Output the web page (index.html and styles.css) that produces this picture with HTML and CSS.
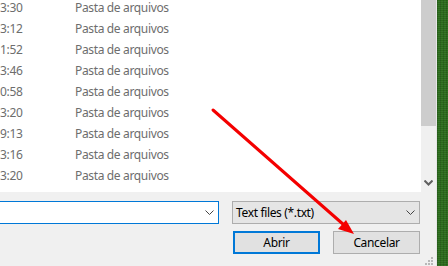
FILE: index.html
```html
<!DOCTYPE html>
<html>
<head>
<meta charset="utf-8">
<link rel="stylesheet" href="styles.css">
</head>
<body>
<div class="screen">
  <div class="dialog">
    <div class="browser">
      <div class="list">
        <div class="rows">
          <div class="row"><span class="time">3:30</span><span class="type">Pasta de arquivos</span></div>
          <div class="row"><span class="time">3:12</span><span class="type">Pasta de arquivos</span></div>
          <div class="row"><span class="time">1:52</span><span class="type">Pasta de arquivos</span></div>
          <div class="row"><span class="time">3:46</span><span class="type">Pasta de arquivos</span></div>
          <div class="row"><span class="time">0:58</span><span class="type">Pasta de arquivos</span></div>
          <div class="row"><span class="time">3:20</span><span class="type">Pasta de arquivos</span></div>
          <div class="row"><span class="time">9:13</span><span class="type">Pasta de arquivos</span></div>
          <div class="row"><span class="time">3:16</span><span class="type">Pasta de arquivos</span></div>
          <div class="row"><span class="time">3:20</span><span class="type">Pasta de arquivos</span></div>
        </div>
      </div>
      <div class="scrollbar">
        <div class="thumb"></div>
        <div class="track">
          <svg class="down" width="9" height="6" viewBox="0 0 9 6"><path d="M0.5 0.5 L4.5 4.5 L8.5 0.5" fill="none" stroke="#606060" stroke-width="2"/></svg>
        </div>
      </div>
    </div>
    <div class="controls">
      <div class="line">
        <div class="filename">
          <svg class="chev" width="9" height="5" viewBox="0 0 9 5"><path d="M0.5 0.5 L4.5 4.5 L8.5 0.5" fill="none" stroke="#444" stroke-width="1"/></svg>
        </div>
        <div class="filter">
          <span>Text files (*.txt)</span>
          <svg class="chev" width="9" height="5" viewBox="0 0 9 5"><path d="M0.5 0.5 L4.5 4.5 L8.5 0.5" fill="none" stroke="#444" stroke-width="1"/></svg>
        </div>
      </div>
      <div class="line buttons">
        <div class="btn primary">Abrir</div>
        <div class="btn">Cancelar</div>
      </div>
    </div>
    <svg class="grip" width="8" height="8" viewBox="0 0 8 8">
      <rect x="6" y="0" width="2" height="2" fill="#b8b8b8"/>
      <rect x="3" y="3" width="2" height="2" fill="#b8b8b8"/>
      <rect x="6" y="3" width="2" height="2" fill="#b8b8b8"/>
      <rect x="0" y="6" width="2" height="2" fill="#b8b8b8"/>
      <rect x="3" y="6" width="2" height="2" fill="#b8b8b8"/>
      <rect x="6" y="6" width="2" height="2" fill="#b8b8b8"/>
    </svg>
  </div>
  <div class="desktop"></div>
  <svg class="annotation" width="448" height="266" viewBox="0 0 448 266">
    <line x1="213" y1="110" x2="344" y2="225" stroke="#f40000" stroke-width="3" stroke-linecap="round"/>
    <polygon points="354,234 338,229 346,220" fill="#f40000"/>
  </svg>
</div>
</body>
</html>
```
FILE: styles.css
```css
html, body {
  margin: 0;
  padding: 0;
}
body {
  width: 448px;
  height: 266px;
  overflow: hidden;
  font-family: "Segoe UI", "Noto Sans", "Open Sans", sans-serif;
  font-size: 12px;
  letter-spacing: -0.35px;
}
.screen {
  position: relative;
  display: flex;
  width: 448px;
  height: 266px;
}
.dialog {
  position: relative;
  width: 436px;
  height: 266px;
  background: #f0f0f0;
  border-right: 1px solid #e6e6e6;
  display: flex;
  flex-direction: column;
}
.desktop {
  flex: 1;
  background-color: #2a6a1b;
  background-image:
    repeating-linear-gradient(90deg, rgba(0,0,0,0.12) 0 1px, transparent 1px 3px),
    repeating-linear-gradient(0deg, rgba(255,255,255,0.06) 0 1px, transparent 1px 2px);
}
.browser {
  display: flex;
  height: 192px;
}
.list {
  width: 421px;
  background: #fff;
  overflow: hidden;
}
.row {
  display: flex;
  align-items: flex-start;
  height: 21px;
  line-height: 15px;
  color: #6d6d6d;
  white-space: nowrap;
}
.time {
  width: 75px;
  flex-shrink: 0;
}
.scrollbar {
  width: 15px;
  display: flex;
  flex-direction: column;
}
.thumb {
  height: 126px;
  background: #cdcdcd;
}
.track {
  flex: 1;
  background: #f0f0f0;
  display: flex;
  align-items: flex-end;
  justify-content: center;
  padding-bottom: 6px;
}
.controls {
  display: flex;
  flex-direction: column;
  gap: 7px;
  padding-top: 9px;
}
.line {
  display: flex;
  height: 23px;
}
.filename {
  box-sizing: border-box;
  width: 219px;
  height: 23px;
  background: #fff;
  border: 1px solid #0078d7;
  border-left: none;
  display: flex;
  align-items: center;
  justify-content: flex-end;
  padding-right: 4px;
}
.filter {
  box-sizing: border-box;
  margin-left: 13px;
  width: 188px;
  height: 23px;
  background: #e5e5e5;
  border: 1px solid #adadad;
  display: flex;
  align-items: center;
  justify-content: space-between;
  padding: 0 4px 0 3px;
  color: #000;
}
.buttons {
  padding-left: 233px;
  gap: 13px;
}
.btn {
  box-sizing: border-box;
  width: 87px;
  height: 23px;
  background: #e1e1e1;
  border: 1px solid #adadad;
  display: flex;
  align-items: center;
  justify-content: center;
  color: #000;
}
.btn.primary {
  border: 2px solid #0078d7;
}
.grip {
  position: absolute;
  right: 3px;
  bottom: 1px;
}
.annotation {
  position: absolute;
  left: 0;
  top: 0;
  pointer-events: none;
}
```
